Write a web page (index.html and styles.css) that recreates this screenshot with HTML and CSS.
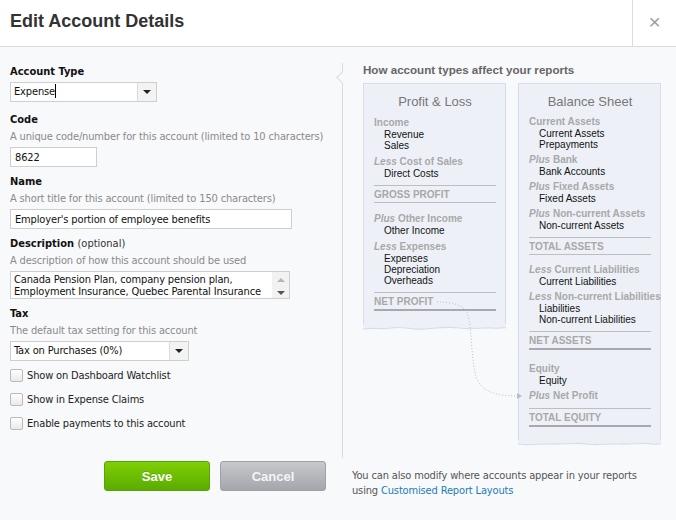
FILE: index.html
```html
<!DOCTYPE html>
<html lang="en">
<head>
    <meta charset="UTF-8">
    <title>Edit Account Details</title>
    <link rel="stylesheet" href="styles.css">
</head>
<body>
    <div class="dialog">
        <div class="dialog-header">
            <h1 class="dialog-title">Edit Account Details</h1>
            <div class="dialog-close">&times;</div>
        </div>

        <div class="dialog-body">
            <form class="account-form">
                <div class="field field-type">
                    <label class="field-label">Account Type</label>
                    <div class="select select-type">
                        <span class="select-value">Expense<span class="caret"></span></span>
                        <span class="select-arrow"></span>
                    </div>
                </div>

                <div class="field">
                    <label class="field-label">Code</label>
                    <div class="field-hint">A unique code/number for this account (limited to 10 characters)</div>
                    <input class="text-input input-code" type="text" value="8622">
                </div>

                <div class="field">
                    <label class="field-label">Name</label>
                    <div class="field-hint">A short title for this account (limited to 150 characters)</div>
                    <input class="text-input input-name" type="text" value="Employer's portion of employee benefits">
                </div>

                <div class="field">
                    <label class="field-label">Description <span class="optional">(optional)</span></label>
                    <div class="field-hint">A description of how this account should be used</div>
                    <div class="textarea-box">
                        <textarea class="textarea">Canada Pension Plan, company pension plan,
Employment Insurance, Quebec Parental Insurance</textarea>
                        <div class="scrollbar">
                            <span class="scroll-up"></span>
                            <span class="scroll-down"></span>
                        </div>
                    </div>
                </div>

                <div class="field">
                    <label class="field-label">Tax</label>
                    <div class="field-hint">The default tax setting for this account</div>
                    <div class="select select-tax">
                        <span class="select-value">Tax on Purchases (0%)</span>
                        <span class="select-arrow"></span>
                    </div>
                </div>

                <div class="checks">
                    <label class="check"><span class="check-box"></span>Show on Dashboard Watchlist</label>
                    <label class="check"><span class="check-box"></span>Show in Expense Claims</label>
                    <label class="check"><span class="check-box"></span>Enable payments to this account</label>
                </div>

                <div class="actions">
                    <button type="button" class="btn btn-save">Save</button>
                    <button type="button" class="btn btn-cancel">Cancel</button>
                </div>
            </form>

            <div class="reports">
                <div class="reports-panel">
                    <h2 class="reports-title">How account types affect your reports</h2>
                    <div class="report-cards">
                        <div class="report-card card-pl">
                            <div class="card-inner">
                                <div class="card-title">Profit &amp; Loss</div>
                                <div class="cat">Income</div>
                                <div class="sub">Revenue</div>
                                <div class="sub">Sales</div>
                                <div class="cat"><i>Less</i> Cost of Sales</div>
                                <div class="sub">Direct Costs</div>
                                <div class="total">GROSS PROFIT</div>
                                <div class="cat gap"><i>Plus</i> Other Income</div>
                                <div class="sub">Other Income</div>
                                <div class="cat"><i>Less</i> Expenses</div>
                                <div class="sub">Expenses</div>
                                <div class="sub">Depreciation</div>
                                <div class="sub">Overheads</div>
                                <div class="total total-final">NET PROFIT</div>
                            </div>
                            <svg class="torn" viewBox="0 0 143 8" preserveAspectRatio="none">
                                <path d="M0 0 L0 5 C10 3 18 6 28 4 C40 2 50 6 62 5 C74 4 84 2 96 4 C108 6 118 3 130 4 C136 5 140 3 143 4 L143 0 Z" fill="#edf1f7"/>
                                <path d="M0 5 C10 3 18 6 28 4 C40 2 50 6 62 5 C74 4 84 2 96 4 C108 6 118 3 130 4 C136 5 140 3 143 4" fill="none" stroke="#d6dee9" stroke-width="1.2"/>
                            </svg>
                        </div>

                        <div class="report-card">
                            <div class="card-inner">
                                <div class="card-title">Balance Sheet</div>
                                <div class="cat">Current Assets</div>
                                <div class="sub">Current Assets</div>
                                <div class="sub">Prepayments</div>
                                <div class="cat"><i>Plus</i> Bank</div>
                                <div class="sub">Bank Accounts</div>
                                <div class="cat"><i>Plus</i> Fixed Assets</div>
                                <div class="sub">Fixed Assets</div>
                                <div class="cat"><i>Plus</i> Non-current Assets</div>
                                <div class="sub">Non-current Assets</div>
                                <div class="total">TOTAL ASSETS</div>
                                <div class="cat gap"><i>Less</i> Current Liabilities</div>
                                <div class="sub">Current Liabilities</div>
                                <div class="cat"><i>Less</i> Non-current Liabilities</div>
                                <div class="sub">Liabilities</div>
                                <div class="sub">Non-current Liabilities</div>
                                <div class="total total-final">NET ASSETS</div>
                                <div class="cat gap-lg">Equity</div>
                                <div class="sub">Equity</div>
                                <div class="cat"><i>Plus</i> Net Profit</div>
                                <div class="total total-final">TOTAL EQUITY</div>
                            </div>
                            <svg class="torn" viewBox="0 0 143 8" preserveAspectRatio="none">
                                <path d="M0 0 L0 4 C12 6 22 3 34 4 C46 5 56 2 68 4 C80 6 90 3 102 4 C114 5 124 2 134 4 C138 5 141 3 143 4 L143 0 Z" fill="#edf1f7"/>
                                <path d="M0 4 C12 6 22 3 34 4 C46 5 56 2 68 4 C80 6 90 3 102 4 C114 5 124 2 134 4 C138 5 141 3 143 4" fill="none" stroke="#d6dee9" stroke-width="1.2"/>
                            </svg>
                        </div>
                    </div>

                    <!-- dotted link from net profit to equity -->
                    <svg class="flow-line" width="100" height="110" viewBox="0 0 100 110">
                        <path d="M4 3 C20 3 32 6 35 16 C39 30 38 60 43 78 C48 92 62 97 84 97" fill="none" stroke="#b4bfce" stroke-width="1" stroke-dasharray="1 2"/>
                        <path d="M84 94 L89 97 L84 100 Z" fill="#b4bfce"/>
                    </svg>
                </div>
                <p class="reports-note">
                    <span class="note-line">You can also modify where accounts appear in your reports</span>
                    <span class="note-line">using <a href="#" class="note-link">Customised Report Layouts</a></span>
                </p>
            </div>
        </div>
    </div>
</body>
</html>
```

FILE: styles.css
```css
*{
    box-sizing: border-box;
}
body{
    margin: 0;
    background: #f8f9fa;
    font-family: "DejaVu Sans Condensed", "Liberation Sans", sans-serif;
    font-size: 11px;
    letter-spacing: -0.15px;
    color: #222;
}
.dialog{
    width: 676px;
    height: 520px;
    background: #f8f9fa;
    overflow: hidden;
}

/* header */
.dialog-header{
    display: flex;
    height: 47px;
    background: #fff;
    border-bottom: 1px solid #dcdcdc;
}
.dialog-title{
    flex: 1;
    margin: 0;
    padding: 11px 0 0 10px;
    font-family: "Liberation Sans", Arial, sans-serif;
    font-size: 18px;
    font-weight: bold;
    letter-spacing: 0;
    color: #333;
}
.dialog-close{
    width: 44px;
    border-left: 1px solid #dcdcdc;
    display: flex;
    justify-content: center;
    align-items: center;
    font-family: "Liberation Sans", Arial, sans-serif;
    font-size: 21px;
    color: #a0a0a0;
    padding-bottom: 3px;
}

.dialog-body{
    display: flex;
}

/* form */
.account-form{
    width: 342px;
    padding: 16px 0 0 10px;
}
.field{
    margin-top: 6px;
}
.field-type{
    margin-top: 0;
    margin-bottom: 9px;
}
.field-label{
    display: block;
    font-weight: bold;
    line-height: 17px;
    letter-spacing: 0;
    color: #111;
}
.optional{
    font-weight: normal;
    color: #333;
}
.field-hint{
    line-height: 17px;
    color: #8a8a8a;
}
.text-input,
.select,
.textarea-box{
    margin-top: 2px;
    border: 1px solid #cfcfcf;
    background: #fff;
    font-family: inherit;
    font-size: 11px;
    letter-spacing: -0.15px;
    color: #111;
}
.text-input{
    display: block;
    height: 20px;
    padding: 0 4px;
    outline: none;
}
.input-code{ width: 87px; }
.input-name{ width: 282px; }

.select{
    display: flex;
    height: 20px;
}
.select-type{ width: 147px; }
.select-tax{ width: 179px; }
.select-value{
    flex: 1;
    padding-left: 3px;
    line-height: 18px;
}
.caret{
    display: inline-block;
    width: 1px;
    height: 14px;
    background: #000;
    vertical-align: -3px;
}
.select-arrow{
    width: 19px;
    border-left: 1px solid #dcdcdc;
    background: #f3f3f3;
    position: relative;
}
.select-arrow::after{
    content: "";
    position: absolute;
    left: 5px;
    top: 7px;
    border-left: 4px solid transparent;
    border-right: 4px solid transparent;
    border-top: 4px solid #222;
}

.textarea-box{
    display: flex;
    width: 280px;
    height: 28px;
    overflow: hidden;
}
.textarea{
    flex: 1;
    border: none;
    resize: none;
    overflow: hidden;
    white-space: pre;
    padding: 2px 3px;
    font-family: inherit;
    font-size: 11px;
    letter-spacing: -0.15px;
    line-height: 12px;
    color: #111;
    outline: none;
}
.scrollbar{
    width: 17px;
    background: #f2f2f2;
    display: flex;
    flex-direction: column;
    justify-content: space-between;
    align-items: center;
    padding: 6px 0 3px;
}
.scroll-up{
    border-left: 4px solid transparent;
    border-right: 4px solid transparent;
    border-bottom: 4px solid #b5b5b5;
}
.scroll-down{
    border-left: 4px solid transparent;
    border-right: 4px solid transparent;
    border-top: 4px solid #555;
}

.checks{
    margin-top: 2px;
}
.check{
    display: flex;
    align-items: center;
    height: 24px;
    color: #222;
}
.check-box{
    width: 13px;
    height: 13px;
    margin-right: 4px;
    border: 1px solid #b9b9b9;
    border-radius: 2px;
    background: linear-gradient(#fff, #e9e9e9);
}

.actions{
    display: flex;
    justify-content: flex-end;
    gap: 10px;
    padding-right: 16px;
    margin-top: 26px;
}
.btn{
    width: 106px;
    height: 30px;
    border-radius: 3px;
    font-family: "Liberation Sans", Arial, sans-serif;
    font-size: 13px;
    font-weight: bold;
    letter-spacing: 0;
    color: #fff;
    cursor: pointer;
}
.btn-save{
    border: 1px solid #5ca10a;
    background: linear-gradient(#7fcf05, #5aac00);
    text-shadow: 0 -1px 0 rgba(0,0,0,0.15);
}
.btn-cancel{
    border: 1px solid #9ea1a5;
    background: linear-gradient(#c6c8cc, #a3a6aa);
    color: #f5f5f5;
}

/* reports explanation */
.reports{
    width: 334px;
}
.reports-panel{
    position: relative;
    margin-top: 16px;
    height: 395px;
    border-left: 1px solid #d5dce6;
    padding-left: 20px;
    letter-spacing: 0;
}
.reports-panel::before{
    content: "";
    position: absolute;
    left: -5px;
    top: 10px;
    width: 8px;
    height: 8px;
    background: #f8f9fa;
    border-left: 1px solid #d5dce6;
    border-bottom: 1px solid #d5dce6;
    transform: rotate(45deg);
}
.reports-title{
    margin: 0;
    font-family: "Liberation Sans", Arial, sans-serif;
    font-size: 11.6px;
    font-weight: bold;
    line-height: 14px;
    color: #666;
}
.report-cards{
    display: flex;
    align-items: flex-start;
    gap: 12px;
    margin-top: 6px;
}
.report-card{
    width: 143px;
    font-family: "Liberation Sans", Arial, sans-serif;
    font-size: 10px;
}
.card-inner{
    background: #edf1f7;
    border: 1px solid #d6dee9;
    border-bottom: none;
    padding: 9px 9px 13px 10px;
}
.torn{
    display: block;
    width: 143px;
    height: 8px;
}
.card-title{
    text-align: center;
    font-size: 13px;
    line-height: 18px;
    color: #777;
    margin-bottom: 5px;
}
.cat{
    margin-top: 4px;
    line-height: 12px;
    font-weight: bold;
    color: #a8a8a8;
    white-space: nowrap;
}
.card-pl .cat{
    line-height: 13px;
}
.cat.gap{
    margin-top: 9px;
}
.cat.gap-lg{
    margin-top: 13px;
}
.sub{
    padding-left: 10px;
    line-height: 11px;
    color: #111;
}
.total{
    margin-top: 6px;
    padding: 3px 0 1px;
    border-top: 1px solid #bdbdc2;
    border-bottom: 1px solid #bdbdc2;
    line-height: 12px;
    font-weight: bold;
    color: #a8a8a8;
}
.total-final{
    border-bottom: 2px solid #a8a8ae;
}
.flow-line{
    position: absolute;
    left: 90px;
    top: 236px;
}

.reports-note{
    margin: 10px 0 0;
    padding-left: 10px;
    line-height: 15px;
    color: #555;
}
.note-line{
    display: block;
}
.note-link{
    color: #1c7cb8;
    text-decoration: none;
}
```
